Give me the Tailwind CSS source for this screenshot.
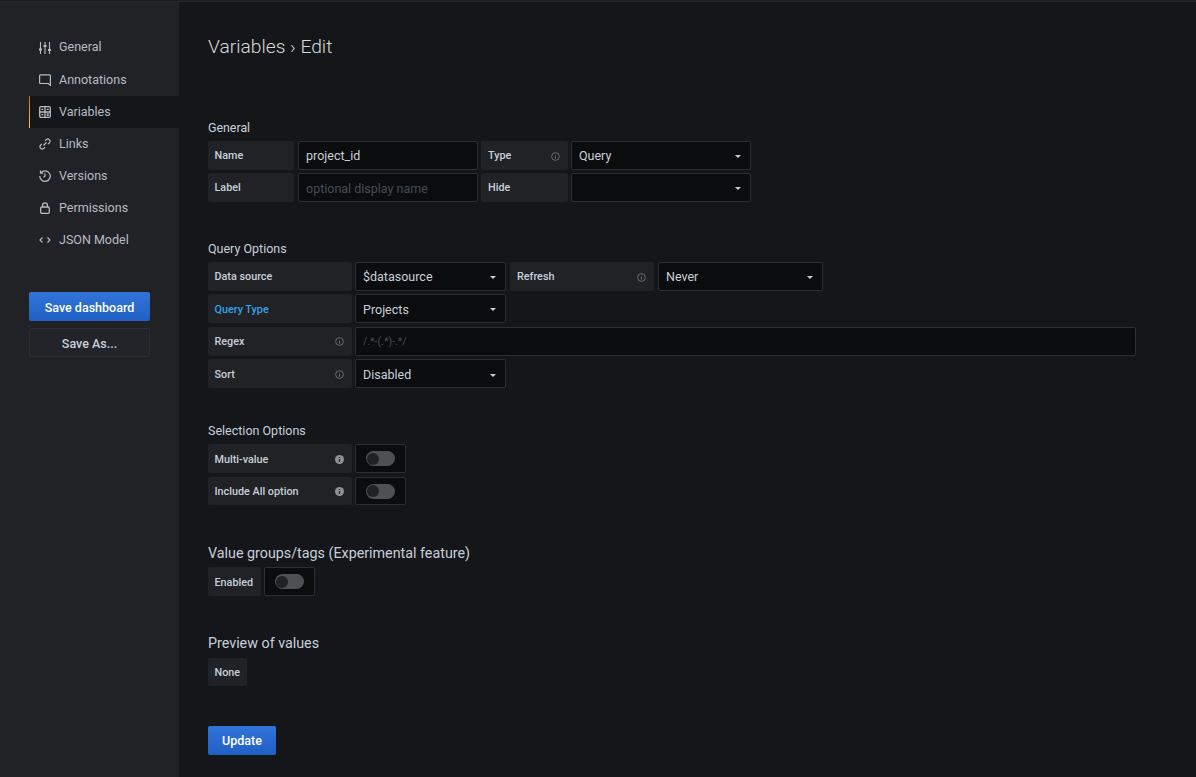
<!DOCTYPE html>
<html lang="en">
<head>
    <meta charset="UTF-8">
    <title>Variables - Edit</title>
    <script src="https://cdn.jsdelivr.net/npm/@tailwindcss/browser@4"></script>
</head>
<body class="h-[777px] overflow-hidden bg-[#141619] font-['Roboto',sans-serif] text-[#c7d0d9]">
    <div class="h-[2px] bg-[#1b1d21] border-b border-[#25272b]"></div>
    <div class="flex h-[775px]">

        <!-- sidebar -->
        <aside class="w-[179px] shrink-0 bg-[#202226] pl-[29px] pt-[30px]">
            <nav class="text-[12.500px] text-[#b7bcc4]">
                <a class="flex h-[32px] items-center gap-[8px] pb-px pl-[10px]">
                    <svg class="h-[12px] w-[12px]" viewBox="0 0 12 12" fill="none" stroke="#b7bcc4" stroke-width="1.100"><path d="M1.500 0v12M6 0v12M10.500 0v12"/><path d="M0 7.500h3M4.500 4h3M9 8h3" stroke-width="2.200"/></svg>
                    General
                </a>
                <a class="flex h-[32px] items-center gap-[8px] pl-[10px]">
                    <svg class="h-[12px] w-[12px]" viewBox="0 0 12 12" fill="none" stroke="#b7bcc4" stroke-width="1.200"><path d="M1.500.8h9a.9.9 0 0 1 .9.9v9.700L9.300 9.500H1.500a.9.9 0 0 1-.9-.9V1.700a.9.9 0 0 1 .9-.9z"/></svg>
                    Annotations
                </a>
                <a class="relative flex h-[32px] items-center gap-[8px] bg-[#141619] pl-[10px]">
                    <span class="absolute left-0 top-0 h-full w-px bg-gradient-to-b from-[#eb5a2c] to-[#fbca0a]"></span>
                    <svg class="h-[12px] w-[12px]" viewBox="0 0 12 12" fill="none" stroke="#b7bcc4" stroke-width="1.300"><rect x=".7" y=".7" width="10.600" height="10.600" rx="1.200"/><path d="M6 .7v10.600M.7 6h10.600"/><path d="M2.300 3.400h2M7.700 3.400h2M2.300 8.600h2M7.700 7.900h2M7.700 9.400h2" stroke-width="1.100"/></svg>
                    Variables
                </a>
                <a class="flex h-[32px] items-center gap-[8px] pl-[10px]">
                    <svg class="h-[12px] w-[12px]" viewBox="0 0 12 12" fill="none" stroke="#b7bcc4" stroke-width="1.200"><path d="M4.500 7.500l3-3"/><path d="M6 2.800l1.400-1.400a2.300 2.300 0 0 1 3.200 3.200L9.200 6"/><path d="M6 9.200l-1.400 1.400a2.300 2.300 0 0 1-3.200-3.200L2.800 6"/></svg>
                    Links
                </a>
                <a class="flex h-[32px] items-center gap-[8px] pl-[10px]">
                    <svg class="h-[12px] w-[12px]" viewBox="0 0 12 12" fill="none" stroke="#b7bcc4" stroke-width="1.200"><path d="M2 2.800A5.200 5.200 0 1 1 .8 6"/><path d="M1.500.6v2.600h2.600M6 3.300V6L4.500 7.200"/></svg>
                    Versions
                </a>
                <a class="flex h-[32px] items-center gap-[8px] pl-[10px]">
                    <svg class="h-[12px] w-[12px]" viewBox="0 0 12 12" fill="none" stroke="#b7bcc4" stroke-width="1.300"><rect x="1.700" y="5" width="8.600" height="6.300" rx="1.200"/><path d="M3.600 5V3.200a2.400 2.400 0 0 1 4.800 0V5"/></svg>
                    Permissions
                </a>
                <a class="flex h-[32px] items-center gap-[8px] pl-[10px]">
                    <svg class="h-[12px] w-[12px]" viewBox="0 0 12 12" fill="none" stroke="#b7bcc4" stroke-width="1.200"><path d="M3.500 3.500L1 6l2.500 2.500M8.500 3.500L11 6 8.500 8.500"/></svg>
                    JSON Model
                </a>
            </nav>
            <div class="mt-[36px] flex w-[121px] flex-col gap-[7px] text-[12.500px] font-medium">
                <button class="h-[29px] rounded-[2px] bg-gradient-to-b from-[#3274d9] to-[#1f60c4] pt-[3px] text-white">Save dashboard</button>
                <button class="h-[29px] rounded-[2px] border border-[#2c2e33] bg-[#222429] pt-[3px] text-[#c7d0d9]">Save As...</button>
            </div>
        </aside>

        <!-- main form -->
        <main class="flex-1 pl-[29px]">
            <h1 class="box-content flex h-[32px] items-center pt-[30px] -mt-[1px] pb-px text-[19.200px] leading-none font-light text-[#d8d9da]">Variables › Edit</h1>

            <h2 class="mt-[54px] flex h-[20px] items-center text-[12.400px] font-normal">General</h2>
            <div class="mt-[3px] flex flex-col gap-[3px]">
                <div class="flex gap-[3px]">
                    <label class="mr-px flex h-[29px] w-[86px] items-center rounded-[2px] bg-[#202226] pl-[6.500px] pt-px text-[10.800px] font-medium">Name</label>
                    <input class="h-[29px] w-[180px] rounded-[2px] border border-[#2c2e33] bg-[#0b0c0e] pl-[7px] text-[12.500px] text-[#c7d0d9]" value="project_id">
                    <label class="flex h-[29px] w-[87px] items-center justify-between rounded-[2px] bg-[#202226] pl-[7px] pr-[8px] pt-px text-[10.800px] font-medium">Type
                        <svg class="h-[9px] w-[9px]" viewBox="0 0 10 10" fill="none" stroke="#6f7378"><circle cx="5" cy="5" r="4.300"/><path d="M5 3v.800M5 4.500v3"/></svg>
                    </label>
                    <div class="flex h-[29px] w-[180px] items-center justify-between rounded-[2px] border border-[#2c2e33] bg-[#0b0c0e] pl-[7px] pr-[9px] pt-px text-[12.500px]">Query
                        <span class="border-x-[3px] border-t-[3px] border-x-transparent border-t-[#c7d0d9]"></span>
                    </div>
                </div>
                <div class="flex gap-[3px]">
                    <label class="mr-px flex h-[29px] w-[86px] items-center rounded-[2px] bg-[#202226] pl-[6.500px] pt-[2px] text-[10.800px] font-medium">Label</label>
                    <input class="h-[29px] w-[180px] rounded-[2px] border border-[#2c2e33] bg-[#0b0c0e] pl-[7px] pt-px text-[12.500px] placeholder:text-[#464c54]" placeholder="optional display name">
                    <label class="flex h-[29px] w-[87px] items-center rounded-[2px] bg-[#202226] px-[7px] pt-[2px] text-[10.800px] font-medium">Hide</label>
                    <div class="flex h-[29px] w-[180px] items-center justify-end rounded-[2px] border border-[#2c2e33] bg-[#0b0c0e] pl-[7px] pr-[9px] pt-px">
                        <span class="border-x-[3px] border-t-[3px] border-x-transparent border-t-[#c7d0d9]"></span>
                    </div>
                </div>
            </div>

            <h2 class="mt-[37px] flex h-[20px] items-center text-[12.500px] font-normal">Query Options</h2>
            <div class="mt-[3px] flex flex-col gap-[3.400px]">
                <div class="flex gap-[3px]">
                    <label class="flex h-[29px] w-[144px] items-center rounded-[2px] bg-[#202226] pl-[6.500px] pt-px text-[10.800px] font-medium">Data source</label>
                    <div class="mr-px flex h-[29px] w-[151px] items-center justify-between rounded-[2px] border border-[#2c2e33] bg-[#0b0c0e] pl-[7px] pr-[9px] pt-px text-[12.500px]">$datasource
                        <span class="border-x-[3px] border-t-[3px] border-x-transparent border-t-[#c7d0d9]"></span>
                    </div>
                    <label class="mr-px flex h-[29px] w-[144px] items-center justify-between rounded-[2px] bg-[#202226] pl-[7px] pr-[8px] pt-px text-[10.800px] font-medium">Refresh
                        <svg class="h-[9px] w-[9px]" viewBox="0 0 10 10" fill="none" stroke="#6f7378"><circle cx="5" cy="5" r="4.300"/><path d="M5 3v.800M5 4.500v3"/></svg>
                    </label>
                    <div class="flex h-[29px] w-[165px] items-center justify-between rounded-[2px] border border-[#2c2e33] bg-[#0b0c0e] pl-[7px] pr-[9px] pt-px text-[12.500px]">Never
                        <span class="border-x-[3px] border-t-[3px] border-x-transparent border-t-[#c7d0d9]"></span>
                    </div>
                </div>
                <div class="flex gap-[3px]">
                    <label class="flex h-[29px] w-[144px] items-center rounded-[2px] bg-[#202226] pl-[6.500px] pt-[2px] text-[10.800px] font-medium text-[#33a2e5]">Query Type</label>
                    <div class="flex h-[29px] w-[151px] items-center justify-between rounded-[2px] border border-[#2c2e33] bg-[#0b0c0e] pl-[7px] pr-[9px] pt-[2px] text-[12.500px]">Projects
                        <span class="border-x-[3px] border-t-[3px] border-x-transparent border-t-[#c7d0d9]"></span>
                    </div>
                </div>
                <div class="flex gap-[3px]">
                    <label class="flex h-[29px] w-[144px] items-center justify-between rounded-[2px] bg-[#202226] pl-[6.500px] pr-[8px] pt-px text-[10.800px] font-medium">Regex
                        <svg class="h-[9px] w-[9px]" viewBox="0 0 10 10" fill="none" stroke="#6f7378"><circle cx="5" cy="5" r="4.300"/><path d="M5 3v.800M5 4.500v3"/></svg>
                    </label>
                    <input class="h-[29px] w-[781px] rounded-[2px] border border-[#2c2e33] bg-[#0b0c0e] pl-[7px] text-[10.500px] placeholder:text-[#464c54]" placeholder="/.*-(.*)-.*/">
                </div>
                <div class="flex gap-[3px]">
                    <label class="flex h-[29px] w-[144px] items-center justify-between rounded-[2px] bg-[#202226] pl-[6.500px] pr-[8px] pt-[2px] text-[10.800px] font-medium">Sort
                        <svg class="h-[9px] w-[9px]" viewBox="0 0 10 10" fill="none" stroke="#6f7378"><circle cx="5" cy="5" r="4.300"/><path d="M5 3v.800M5 4.500v3"/></svg>
                    </label>
                    <div class="flex h-[29px] w-[151px] items-center justify-between rounded-[2px] border border-[#2c2e33] bg-[#0b0c0e] pl-[7px] pr-[9px] pt-[3px] text-[12.500px]">Disabled
                        <span class="border-x-[3px] border-t-[3px] border-x-transparent border-t-[#c7d0d9]"></span>
                    </div>
                </div>
            </div>

            <h2 class="mt-[33px] flex h-[20px] items-center text-[12.500px] font-normal">Selection Options</h2>
            <div class="mt-[3px] flex flex-col gap-[4px]">
                <div class="flex gap-[3px]">
                    <label class="flex h-[29px] w-[144px] items-center justify-between rounded-[2px] bg-[#202226] pl-[6.500px] pr-[8px] pt-[2px] text-[10.800px] font-medium">Multi-value
                        <svg class="h-[9px] w-[9px]" viewBox="0 0 10 10"><circle cx="5" cy="5" r="5" fill="#8e9297"/><path d="M5 2.200v1.200M5 4.500v3.300" stroke="#202226" stroke-width="1.300"/></svg>
                    </label>
                    <div class="flex h-[29px] w-[51px] items-center justify-center rounded-[2px] border border-[#2c2e33] bg-[#0b0c0e]">
                        <span class="flex h-[15px] w-[29px] items-center rounded-full bg-[#4f5054] pl-[1px]"><span class="h-[12px] w-[12px] rounded-full bg-[#202226]"></span></span>
                    </div>
                </div>
                <div class="flex gap-[3px]">
                    <label class="flex h-[28px] w-[144px] items-center justify-between rounded-[2px] bg-[#202226] pl-[6.500px] pr-[8px] pt-px text-[10.800px] font-medium">Include All option
                        <svg class="h-[9px] w-[9px]" viewBox="0 0 10 10"><circle cx="5" cy="5" r="5" fill="#8e9297"/><path d="M5 2.200v1.200M5 4.500v3.300" stroke="#202226" stroke-width="1.300"/></svg>
                    </label>
                    <div class="flex h-[28px] w-[51px] items-center justify-center rounded-[2px] border border-[#2c2e33] bg-[#0b0c0e]">
                        <span class="flex h-[15px] w-[29px] items-center rounded-full bg-[#4f5054] pl-[1px]"><span class="h-[12px] w-[12px] rounded-full bg-[#202226]"></span></span>
                    </div>
                </div>
            </div>

            <h2 class="mt-[38px] flex h-[20px] items-center pt-px text-[14.300px] font-normal">Value groups/tags (Experimental feature)</h2>
            <div class="mt-[4px] flex gap-[3px]">
                <label class="flex h-[29px] w-[53px] items-center rounded-[2px] bg-[#202226] pl-[6.500px] pt-[2px] text-[10.800px] font-medium">Enabled</label>
                <div class="flex h-[29px] w-[51px] items-center justify-center rounded-[2px] border border-[#2c2e33] bg-[#0b0c0e]">
                    <span class="flex h-[15px] w-[29px] items-center rounded-full bg-[#4f5054] pl-[1px]"><span class="h-[12px] w-[12px] rounded-full bg-[#202226]"></span></span>
                </div>
            </div>

            <h2 class="mt-[37px] flex h-[20px] items-center pt-px text-[14.300px] font-normal">Preview of values</h2>
            <div class="mt-[5px] flex h-[28px] w-[39px] items-center rounded-[2px] bg-[#202226] pl-[6.500px] pt-px text-[10.800px] font-medium">None</div>

            <button class="mt-[40px] h-[29px] w-[68px] rounded-[2px] bg-gradient-to-b from-[#3274d9] to-[#1f60c4] pt-[2px] text-[12.500px] font-medium text-white">Update</button>
        </main>
    </div>
</body>
</html>
